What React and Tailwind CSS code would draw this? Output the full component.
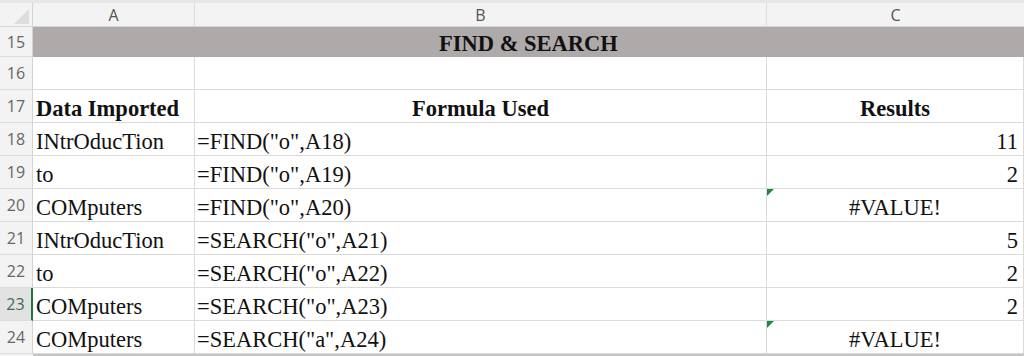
// App.jsx — Excel sheet snippet: FIND & SEARCH examples

const COLS = 'grid grid-cols-[33px_162px_572px_1fr]';
const SERIF = "font-['Liberation_Serif','Times_New_Roman','DejaVu_Serif',serif]";
const UI = "font-['Open_Sans','Noto_Sans',sans-serif]";

const rows = [
  { n: 18, a: 'INtrOducTion', b: '=FIND("o",A18)', c: '11' },
  { n: 19, a: 'to', b: '=FIND("o",A19)', c: '2' },
  { n: 20, a: 'COMputers', b: '=FIND("o",A20)', c: '#VALUE!', err: true },
  { n: 21, a: 'INtrOducTion', b: '=SEARCH("o",A21)', c: '5' },
  { n: 22, a: 'to', b: '=SEARCH("o",A22)', c: '2' },
  { n: 23, a: 'COMputers', b: '=SEARCH("o",A23)', c: '2', active: true },
  { n: 24, a: 'COMputers', b: '=SEARCH("a",A24)', c: '#VALUE!', err: true },
];

function RowHead({ n, active }) {
  return (
    <div
      className={`${UI} flex items-center justify-center text-[16px] border-b border-[#dcdcdc] ${
        active ? 'bg-[#e2e2e2] text-[#3f6b52] border-r-2 border-r-[#217346]' : 'bg-[#f3f3f3] text-[#666] border-r border-r-[#d4d4d4]'
      }`}
    >
      {n}
    </div>
  );
}

function Cell({ children, className = '' }) {
  return (
    <div
      className={`${SERIF} relative flex items-end pb-[2px] text-[22.5px] leading-none text-[#111] border-r border-b border-[#dadada] whitespace-nowrap overflow-hidden ${className}`}
    >
      {children}
    </div>
  );
}

function ErrFlag() {
  return (
    <svg className="absolute left-0 top-0" width="7" height="7" viewBox="0 0 7 7">
      <polygon points="0,0 7,0 0,7" fill="#1e8a3c" />
    </svg>
  );
}

export default function App() {
  return (
    <div className="w-[1024px] h-[356px] bg-white overflow-hidden flex flex-col">
      <div className="h-[3px] bg-[#e6e6e6]" />

      {/* column letters */}
      <div className={`${COLS} ${UI} h-[24px] bg-[#f3f3f3] text-[16px] text-[#555] border-b border-[#d4d4d4]`}>
        <div className="relative border-r border-[#d4d4d4]">
          <svg className="absolute right-[3px] bottom-[3px]" width="15" height="15" viewBox="0 0 15 15">
            <polygon points="15,0 15,15 0,15" fill="#dcdcdc" />
          </svg>
        </div>
        <div className="flex items-center justify-center border-r border-[#dcdcdc]">A</div>
        <div className="flex items-center justify-center border-r border-[#dcdcdc]">B</div>
        <div className="flex items-center justify-center">C</div>
      </div>

      {/* 15: merged title */}
      <div className="grid grid-cols-[33px_1fr] h-[30px]">
        <RowHead n={15} />
        <div
          className={`${SERIF} flex items-end justify-center pb-[2px] bg-[#aeaaaa] text-[22.5px] leading-none font-bold text-[#111]`}
        >
          FIND &amp; SEARCH
        </div>
      </div>

      {/* 16: blank */}
      <div className={`${COLS} h-[33px]`}>
        <RowHead n={16} />
        <Cell />
        <Cell />
        <Cell />
      </div>

      {/* 17: headings */}
      <div className={`${COLS} h-[33px]`}>
        <RowHead n={17} />
        <Cell className="font-bold pl-[3px]">Data Imported</Cell>
        <Cell className="font-bold justify-center">Formula Used</Cell>
        <Cell className="font-bold justify-center">Results</Cell>
      </div>

      {rows.map(r => (
        <div key={r.n} className={`${COLS} h-[33px]`}>
          <RowHead n={r.n} active={r.active} />
          <Cell className="pl-[3px]">{r.a}</Cell>
          <Cell className="pl-[2px]">{r.b}</Cell>
          <Cell className={r.err ? 'justify-center' : 'justify-end pr-[5px]'}>
            {r.err && <ErrFlag />}
            {r.c}
          </Cell>
        </div>
      ))}

      <div className="grid grid-cols-[33px_1fr] flex-1">
        <div className="bg-[#f3f3f3]" />
        <div className="bg-[#c4c4c4]" />
      </div>
    </div>
  );
}
